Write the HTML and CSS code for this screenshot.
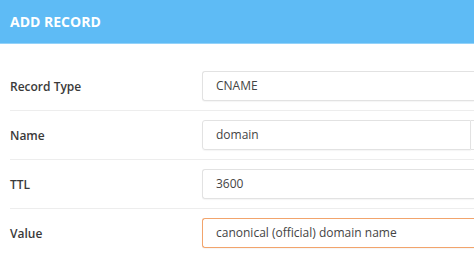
FILE: index.html
```html
<!DOCTYPE html>
<html lang="en">
<head>
  <meta charset="UTF-8" />
  <meta name="viewport" content="width=device-width, initial-scale=1.0" />
  <title>Add Record</title>
  <link rel="stylesheet" href="styles.css">
</head>
<body>
  <div class="modal">
    <div class="modal-header">ADD RECORD</div>
    <div class="modal-body">
      <div class="row">
        <label class="row-label">Record Type</label>
        <div class="field">CNAME</div>
      </div>
      <div class="row">
        <label class="row-label">Name</label>
        <div class="field-group">
          <div class="field field-short">domain</div>
          <div class="field-addon"></div>
        </div>
      </div>
      <div class="row">
        <label class="row-label">TTL</label>
        <div class="field">3600</div>
      </div>
      <div class="row row-last">
        <label class="row-label">Value</label>
        <div class="field field-focus">canonical (official) domain name</div>
      </div>
    </div>
  </div>
</body>
</html>
```

FILE: styles.css
```css
html, body {
  margin: 0;
  padding: 0;
  background: #fff;
}

body {
  font-family: "Open Sans", "Liberation Sans", sans-serif;
  width: 474px;
  height: 255px;
  overflow: hidden;
}

.modal-header {
  height: 43px;
  line-height: 43px;
  background: #5ebbf5;
  border-bottom: 1px solid #93d2f9;
  color: #fff;
  font-size: 14px;
  font-weight: 700;
  padding-left: 10px;
}

.modal-body {
  padding: 18px 0 0 10px;
}

.row {
  display: flex;
  align-items: center;
  padding: 9px 0;
  border-bottom: 1px solid #ededed;
}

.row-last {
  border-bottom: none;
}

.row-label {
  width: 192px;
  flex-shrink: 0;
  font-size: 12px;
  font-weight: 600;
  color: #3a3a3a;
}

.field {
  box-sizing: border-box;
  flex: 1;
  min-width: 0;
  height: 30px;
  line-height: 28px;
  padding: 0 13px;
  border: 1px solid #e2e2e2;
  border-right: none;
  border-radius: 3px 0 0 3px;
  box-shadow: 0 1px 1px rgba(0, 0, 0, 0.04);
  font-size: 12px;
  color: #444;
  white-space: nowrap;
}

.field-group {
  display: flex;
  flex: 1;
}

.field-short {
  border-right: 1px solid #e2e2e2;
}

.field-addon {
  box-sizing: border-box;
  width: 3px;
  height: 30px;
  border-top: 1px solid #e2e2e2;
  border-bottom: 1px solid #e2e2e2;
}

.field-focus {
  border-color: #f2a46c;
}
```
